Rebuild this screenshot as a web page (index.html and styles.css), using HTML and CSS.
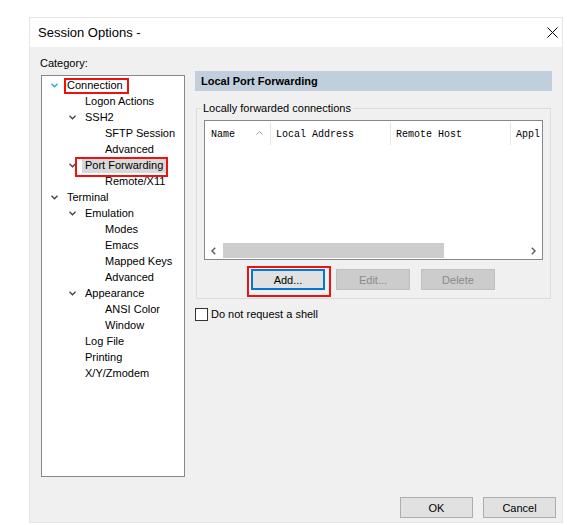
FILE: index.html
```html
<!DOCTYPE html>
<html>
<head>
<meta charset="utf-8">
<link rel="stylesheet" href="styles.css">
</head>
<body>
<div class="dialog">
  <div class="titlebar">
    <span class="title">Session Options -</span>
    <svg class="close" width="11" height="11" viewBox="0 0 11 11"><path d="M0.5 0.5 L10.5 10.5 M10.5 0.5 L0.5 10.5" stroke="#000" stroke-width="1" fill="none"/></svg>
  </div>
  <div class="body">
    <div class="main">
      <div class="left">
        <div class="cat-label">Category:</div>
        <div class="tree">
          <div class="row l0"><span class="chev"><svg width="7" height="5" viewBox="0 0 7 5"><polyline points="0.5,0.8 3.5,3.8 6.5,0.8" fill="none" stroke="#2aa3e0" stroke-width="1.3"/></svg></span><span class="lbl mark-conn">Connection</span></div>
          <div class="row l1"><span class="chev"></span><span class="lbl">Logon Actions</span></div>
          <div class="row l1"><span class="chev"><svg width="7" height="5" viewBox="0 0 7 5"><polyline points="0.5,0.8 3.5,3.8 6.5,0.8" fill="none" stroke="#404040" stroke-width="1.3"/></svg></span><span class="lbl">SSH2</span></div>
          <div class="row l2"><span class="chev"></span><span class="lbl">SFTP Session</span></div>
          <div class="row l2"><span class="chev"></span><span class="lbl">Advanced</span></div>
          <div class="row l1"><span class="chev"><svg width="7" height="5" viewBox="0 0 7 5"><polyline points="0.5,0.8 3.5,3.8 6.5,0.8" fill="none" stroke="#404040" stroke-width="1.3"/></svg></span><span class="lbl sel mark-pf">Port Forwarding</span></div>
          <div class="row l2"><span class="chev"></span><span class="lbl">Remote/X11</span></div>
          <div class="row l0"><span class="chev"><svg width="7" height="5" viewBox="0 0 7 5"><polyline points="0.5,0.8 3.5,3.8 6.5,0.8" fill="none" stroke="#404040" stroke-width="1.3"/></svg></span><span class="lbl">Terminal</span></div>
          <div class="row l1"><span class="chev"><svg width="7" height="5" viewBox="0 0 7 5"><polyline points="0.5,0.8 3.5,3.8 6.5,0.8" fill="none" stroke="#404040" stroke-width="1.3"/></svg></span><span class="lbl">Emulation</span></div>
          <div class="row l2"><span class="chev"></span><span class="lbl">Modes</span></div>
          <div class="row l2"><span class="chev"></span><span class="lbl">Emacs</span></div>
          <div class="row l2"><span class="chev"></span><span class="lbl">Mapped Keys</span></div>
          <div class="row l2"><span class="chev"></span><span class="lbl">Advanced</span></div>
          <div class="row l1"><span class="chev"><svg width="7" height="5" viewBox="0 0 7 5"><polyline points="0.5,0.8 3.5,3.8 6.5,0.8" fill="none" stroke="#404040" stroke-width="1.3"/></svg></span><span class="lbl">Appearance</span></div>
          <div class="row l2"><span class="chev"></span><span class="lbl">ANSI Color</span></div>
          <div class="row l2"><span class="chev"></span><span class="lbl">Window</span></div>
          <div class="row l1"><span class="chev"></span><span class="lbl">Log File</span></div>
          <div class="row l1"><span class="chev"></span><span class="lbl">Printing</span></div>
          <div class="row l1"><span class="chev"></span><span class="lbl">X/Y/Zmodem</span></div>
        </div>
      </div>
      <div class="right">
        <div class="section-head">Local Port Forwarding</div>
        <fieldset class="group">
          <legend>Locally forwarded connections</legend>
          <div class="list">
            <div class="list-head">
              <div class="col c1"><span>Name</span><svg class="sort" width="7" height="4" viewBox="0 0 7 4"><polyline points="0.5,3.5 3.5,0.5 6.5,3.5" fill="none" stroke="#9a9a9a" stroke-width="1"/></svg></div>
              <div class="col c2">Local Address</div>
              <div class="col c3">Remote Host</div>
              <div class="col c4">Appl</div>
            </div>
            <div class="list-body"></div>
            <div class="hscroll">
              <div class="sbtn"><svg width="5" height="8" viewBox="0 0 5 8"><polyline points="4.2,0.7 1,4 4.2,7.3" fill="none" stroke="#606060" stroke-width="1.5"/></svg></div>
              <div class="thumb"></div>
              <div class="track"></div>
              <div class="sbtn"><svg width="5" height="8" viewBox="0 0 5 8"><polyline points="0.8,0.7 4,4 0.8,7.3" fill="none" stroke="#606060" stroke-width="1.5"/></svg></div>
            </div>
          </div>
          <div class="btn-row">
            <button class="btn default mark-add">Add...</button>
            <button class="btn" disabled>Edit...</button>
            <button class="btn" disabled>Delete</button>
          </div>
        </fieldset>
        <div class="check"><span class="box"></span><span>Do not request a shell</span></div>
      </div>
    </div>
    <div class="footer">
      <button class="btn fbtn">OK</button>
      <button class="btn fbtn">Cancel</button>
    </div>
  </div>
</div>
</body>
</html>
```

FILE: styles.css
```css
*, *::before, *::after { box-sizing: border-box; }
html, body { margin: 0; padding: 0; }
body {
  background: #fff;
  font-family: "Liberation Sans", Arial, sans-serif;
  font-size: 11px;
  color: #000;
}
.dialog {
  margin: 17px 0 0 29px;
  width: 534px;
  height: 506px;
  border: 1px solid #e4e4e4;
  background: #f0f0f0;
  display: flex;
  flex-direction: column;
}
.titlebar {
  flex: none;
  height: 29px;
  background: #fff;
  display: flex;
  align-items: center;
  justify-content: space-between;
  padding: 0 4px 0 8px;
}
.title { font-size: 13px; color: #000; }
.close { display: block; }
.body {
  flex: 1;
  display: flex;
  flex-direction: column;
  padding: 8px 6px 4px 10px;
}
.main { display: flex; }
.left { width: 145px; flex: none; }
.cat-label { line-height: 16px; }
.tree {
  margin: 4px 0 0 1px;
  width: 144px;
  height: 402px;
  border: 1px solid #828790;
  background: #fff;
  padding-top: 1px;
}
.row {
  height: 16px;
  display: flex;
  align-items: center;
  white-space: nowrap;
}
.l0 { padding-left: 9px; }
.l1 { padding-left: 27px; }
.l2 { padding-left: 47px; }
.chev {
  width: 16px;
  flex: none;
  display: flex;
  align-items: center;
}
.chev svg { display: block; }
.lbl {
  display: inline-block;
  line-height: 16px;
  height: 16px;
  position: relative;
}
.sel {
  background: #d9d9d9;
  margin-left: -3px;
  padding: 0 3px;
  height: 15px;
  line-height: 15px;
}
.mark-conn::after {
  content: "";
  position: absolute;
  left: -3px;
  top: 1px;
  width: 65px;
  height: 16px;
  border: 2px solid #ee1111;
}
.mark-pf::after {
  content: "";
  position: absolute;
  left: -7px;
  top: -1px;
  width: 93px;
  height: 20px;
  border: 2px solid #ee1111;
}
.right {
  margin-left: 10px;
  width: 357px;
  flex: none;
  padding-top: 16px;
}
.section-head {
  height: 20px;
  line-height: 20px;
  background: #c1cedb;
  font-weight: bold;
  padding-left: 6px;
}
.group {
  margin: 10px 0 0 1px;
  width: 355px;
  border: 1px solid #dcdcdc;
  padding: 5px 7px 8px 7px;
  min-width: 0;
}
.group legend {
  padding: 0 2px;
  margin-left: -3px;
  line-height: 14px;
}
.list {
  width: 339px;
  height: 140px;
  border: 1px solid #828790;
  background: #fff;
  display: flex;
  flex-direction: column;
  overflow: hidden;
}
.list-head {
  flex: none;
  height: 25px;
  display: flex;
  align-items: center;
  font-family: "Liberation Mono", "DejaVu Sans Mono", monospace;
  font-size: 10px;
  color: #000;
}
.col {
  height: 23px;
  display: flex;
  align-items: center;
  border-right: 1px solid #e5e5e5;
  padding-left: 5px;
  padding-top: 2px;
  white-space: nowrap;
  flex: none;
}
.c1 { width: 66px; padding-left: 6px; }
.c2 { width: 120px; }
.c3 { width: 120px; }
.c4 { width: 40px; border-right: none; }
.sort { margin-left: auto; margin-right: 7px; margin-top: -3px; display: block; }
.list-body { flex: 1; }
.hscroll {
  flex: none;
  height: 17px;
  display: flex;
  align-items: center;
  background: #fff;
}
.sbtn {
  width: 17px;
  height: 17px;
  display: flex;
  align-items: center;
  justify-content: center;
  flex: none;
}
.sbtn svg { display: block; }
.thumb {
  margin-left: 1px;
  width: 221px;
  height: 15px;
  background: #cdcdcd;
  flex: none;
}
.track { flex: 1; }
.btn-row {
  display: flex;
  gap: 11px;
  margin-top: 9px;
  padding-left: 47px;
}
.btn {
  width: 74px;
  height: 21px;
  padding: 0;
  background: #e1e1e1;
  border: 1px solid #adadad;
  font-family: "Liberation Sans", Arial, sans-serif;
  font-size: 11px;
  color: #000;
  position: relative;
}
.btn.default { border: 2px solid #0078d7; }
.btn:disabled {
  background: #cccccc;
  border-color: #bfbfbf;
  color: #8a8a8a;
}
.mark-add::after {
  content: "";
  position: absolute;
  left: -6px;
  top: -5px;
  width: 84px;
  height: 31px;
  border: 2px solid #ee1111;
}
.check {
  display: flex;
  align-items: center;
  margin-top: 8px;
  height: 14px;
}
.box {
  width: 13px;
  height: 13px;
  border: 1px solid #333;
  background: #fff;
  margin-right: 3px;
  flex: none;
}
.footer {
  margin-top: auto;
  display: flex;
  justify-content: flex-end;
  gap: 10px;
}
.fbtn { width: 73px; }
```
